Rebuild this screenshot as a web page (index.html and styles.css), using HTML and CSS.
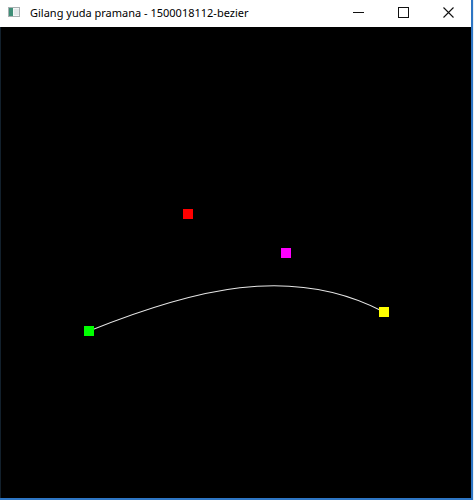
FILE: index.html
```html
<!DOCTYPE html>
<html lang="id">
<head>
    <meta charset="UTF-8">
    <meta name="viewport" content="width=device-width, initial-scale=1.0">
    <title>Gilang yuda pramana - 1500018112-bezier</title>
    <link rel="stylesheet" href="styles.css">
</head>
<body>
    <div class="window">
        <div class="titlebar">
            <svg class="app-icon" width="12" height="10" viewBox="0 0 12 10">
                <rect x="0.5" y="0.5" width="11" height="9" fill="#f4f6f6" stroke="#a9b0b2"/>
                <rect x="1" y="1" width="4" height="8" fill="#3f8f78"/>
                <rect x="6" y="2" width="5" height="6" fill="#e3e8ea"/>
            </svg>
            <div class="title">Gilang yuda pramana - 1500018112-bezier</div>
            <div class="controls">
                <div class="ctrl">
                    <svg width="11" height="11" viewBox="0 0 11 11"><line x1="0" y1="5.5" x2="11" y2="5.5" stroke="#111" stroke-width="1"/></svg>
                </div>
                <div class="ctrl">
                    <svg width="11" height="11" viewBox="0 0 11 11"><rect x="0.5" y="0.5" width="10" height="10" fill="none" stroke="#111" stroke-width="1"/></svg>
                </div>
                <div class="ctrl">
                    <svg width="11" height="11" viewBox="0 0 11 11"><path d="M0.5 0.5 L10.5 10.5 M10.5 0.5 L0.5 10.5" stroke="#111" stroke-width="1.1"/></svg>
                </div>
            </div>
        </div>

        <div class="canvas">
            <svg width="470" height="471" viewBox="0 0 470 471">
                <!-- kurva bezier -->
                <path d="M88 304 C190 263 290 236 383 285" fill="none" stroke="#e6e6e6" stroke-width="1.1"/>
                <!-- titik kontrol -->
                <rect x="83" y="299" width="10" height="10" fill="#00ff00"/>
                <rect x="182" y="182" width="10" height="10" fill="#ff0000"/>
                <rect x="280" y="221" width="10" height="10" fill="#ff00ff"/>
                <rect x="378" y="280" width="10" height="10" fill="#ffff00"/>
            </svg>
        </div>
    </div>
</body>
</html>
```

FILE: styles.css
```css
body {
    margin: 0;
    background-color: #e9eef3;
    font-family: "Noto Sans", "Open Sans", sans-serif;
}

.window {
    width: 471px;
    height: 498px;
    display: flex;
    flex-direction: column;
    border-right: 2px solid #2e76c4;
    border-bottom: 2px solid #2e76c4;
    background-color: #000;
}

.titlebar {
    height: 24px;
    padding-bottom: 3px;
    background-color: #fff;
    display: flex;
    align-items: center;
}

.app-icon {
    margin-left: 8px;
    margin-right: 10px;
}

.title {
    font-size: 11px;
    color: #000;
    flex: 1;
    white-space: nowrap;
}

.controls {
    display: flex;
}

.ctrl {
    width: 45px;
    height: 24px;
    display: flex;
    align-items: center;
    justify-content: center;
}

.canvas {
    flex: 1;
    border-left: 1px solid #12202c;
    overflow: hidden;
}

.canvas svg {
    display: block;
}
```
